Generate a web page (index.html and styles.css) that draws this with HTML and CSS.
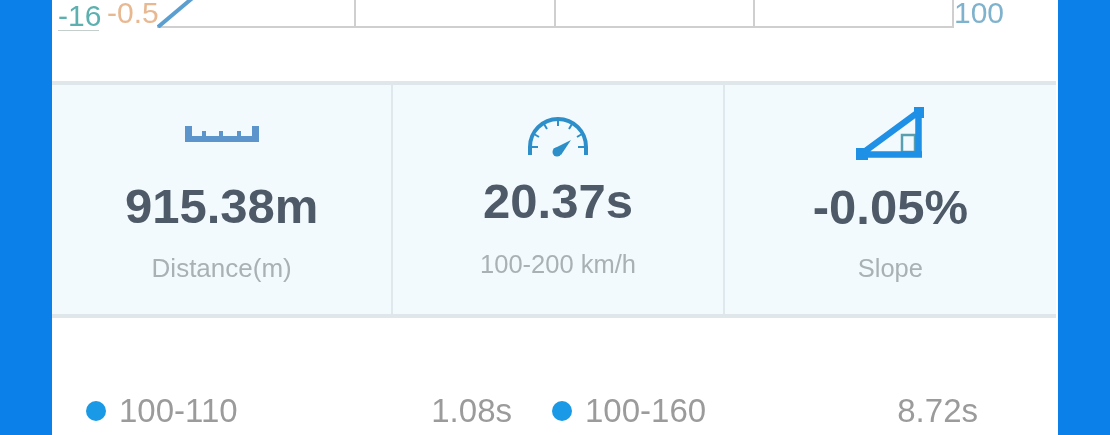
FILE: index.html
```html
<!DOCTYPE html>
<html lang="en">

<head>
    <meta charset="UTF-8">
    <title>Performance result</title>
    <link rel="stylesheet" href="styles.css">
</head>

<body>
    <div id="panel">
        <div id="chart">
            <span id="min-g">-16</span>
            <span id="min-s">-0.5</span>
            <div id="plot">
                <div class="plot-cell"></div>
                <div class="plot-cell"></div>
                <div class="plot-cell"></div>
                <div class="plot-cell"></div>
                <svg id="curve" width="40" height="28" viewBox="0 0 40 28">
                    <line x1="1" y1="27" x2="45" y2="-10" stroke="#5a9fd0" stroke-width="4" />
                </svg>
            </div>
            <span id="max-x">100</span>
        </div>

        <div id="stats">
            <div class="stat stat-distance">
                <svg class="icon" width="74" height="17" viewBox="0 0 74 17" fill="#5b95cc">
                    <rect x="0" y="10" width="74" height="6" />
                    <rect x="0" y="0" width="7" height="16" />
                    <rect x="67" y="0" width="7" height="16" />
                    <rect x="17" y="5" width="4" height="6" />
                    <rect x="34" y="5" width="4" height="6" />
                    <rect x="52" y="5" width="4" height="6" />
                </svg>
                <div class="value">915.38m</div>
                <div class="label">Distance(m)</div>
            </div>
            <div class="stat stat-time">
                <svg class="icon" width="62" height="41" viewBox="0 0 62 41" fill="none" stroke="#2c8fc9">
                    <path d="M3 39V31a28 28 0 0 1 56 0V39" stroke-width="4" />
                    <path d="M31 4v6M17 8l3 5M7 18l5 3M4 31h7M45 8l-3 5M55 18l-5 3M58 31h-7" stroke-width="2" />
                    <path d="M26 33L44 24 34 39z" fill="#2c8fc9" stroke="none" />
                    <circle cx="30" cy="36" r="4.500" fill="#2c8fc9" stroke="none" />
                </svg>
                <div class="value">20.37s</div>
                <div class="label">100-200 km/h</div>
            </div>
            <div class="stat stat-slope">
                <svg class="icon" width="68" height="54" viewBox="0 0 68 54">
                    <rect x="46" y="28" width="13" height="17" fill="none" stroke="#5a9fb0" stroke-width="2.500" />
                    <path d="M8 45L61 6M8 47.500H66M62.500 5V50" fill="none" stroke="#1e90e6" stroke-width="6.500" />
                    <rect x="0" y="41" width="12" height="12" fill="#1e90e6" />
                    <rect x="58" y="0" width="10" height="11" fill="#1e90e6" />
                </svg>
                <div class="value">-0.05%</div>
                <div class="label">Slope</div>
            </div>
        </div>

        <div id="splits">
            <div class="split">
                <span class="dot"></span>
                <span class="range">100-110</span>
                <span class="time">1.08s</span>
            </div>
            <div class="split">
                <span class="dot"></span>
                <span class="range">100-160</span>
                <span class="time">8.72s</span>
            </div>
        </div>
    </div>
</body>

</html>
```

FILE: styles.css
```css
* {
    box-sizing: border-box;
    font-family: "Liberation Sans", Arial, sans-serif;
}

body {
    margin: 0;
    height: 435px;
    overflow: hidden;
    display: flex;
    justify-content: center;
    background: #0a80e8;
}

#panel {
    width: 1006px;
    height: 435px;
    overflow: hidden;
    background: #fff;
    filter: blur(0.5px);
}

/* chart, only its lower edge is in view */
#chart {
    display: flex;
    align-items: flex-start;
    height: 81px;
    padding-left: 6px;
    font-size: 30px;
    font-weight: 300;
    line-height: 26px;
    white-space: nowrap;
}

#min-g {
    position: relative;
    width: 49px;
    height: 31px;
    padding-top: 3px;
    color: #5cb0b0;
}

/* the axis tick runs under the label but stops short of it */
#min-g::after {
    content: "";
    position: absolute;
    left: 0;
    bottom: 0;
    width: 41px;
    border-bottom: 1px solid #c4cfcc;
}

#min-s {
    width: 50px;
    color: #e8b890;
}

#plot {
    position: relative;
    display: flex;
    width: 797px;
    height: 28px;
}

.plot-cell {
    flex: 1;
    border-right: 2px solid #cfcfcf;
    border-bottom: 2px solid #cfcfcf;
}

#curve {
    position: absolute;
    left: 0;
    top: 0;
}

#max-x {
    color: #7fb2cc;
}

/* three stat cells */
#stats {
    display: flex;
    height: 237px;
    margin-right: 2px;
    background: #f2fafe;
    border-top: 4px solid #dfe7eb;
    border-bottom: 4px solid #dfe7eb;
}

.stat {
    display: flex;
    flex-direction: column;
    align-items: center;
    width: 332px;
}

.stat-distance {
    width: 342px;
    padding-top: 41px;
    border-right: 2px solid #dfe8ec;
}

.stat-time {
    padding-top: 31px;
    border-right: 2px solid #dfe8ec;
}

.stat-slope {
    padding-top: 22px;
}

.icon {
    display: block;
}

.value {
    font-size: 49px;
    font-weight: 700;
    line-height: 50px;
    color: #4e5a68;
}

.label {
    font-size: 25.500px;
    line-height: 30px;
    color: #a9b1b5;
}

.stat-distance .label {
    font-size: 26px;
}

.stat-distance .value {
    margin-top: 38px;
}

.stat-distance .label {
    margin-top: 22px;
}

.stat-time .value {
    margin-top: 19px;
}

.stat-time .label {
    margin-top: 23px;
}

.stat-slope .value {
    margin-top: 21px;
}

.stat-slope .label {
    margin-top: 21px;
}

/* split times */
#splits {
    display: grid;
    grid-template-columns: 426px 426px;
    column-gap: 40px;
    padding: 75px 0 0 34px;
}

.split {
    display: flex;
    align-items: center;
    height: 36px;
    font-size: 33px;
    color: #9b9b9b;
}

.dot {
    width: 20px;
    height: 20px;
    margin-right: 13px;
    border-radius: 50%;
    background: #1a9ae6;
}

.range {
    flex: 1;
}
```
